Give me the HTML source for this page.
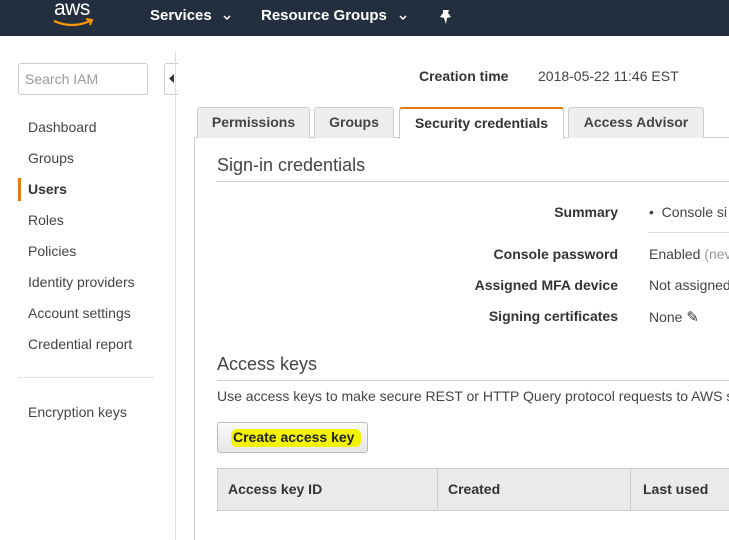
<!DOCTYPE html>
<html style="width:729px;height:540px;overflow:hidden"><head><style>
*{margin:0;padding:0;box-sizing:border-box}
body{width:729px;height:540px;overflow:hidden;background:#fff;font-family:"Liberation Sans",Arial,sans-serif;color:#444;position:relative;font-size:14px}
.a{position:absolute;white-space:nowrap}
.nav{position:absolute;left:0;top:0;width:729px;height:36px;background:#232f3e}
.nav .t{color:#fff;font-weight:bold;font-size:15px;top:7px}
.side a{position:absolute;left:28px;color:#444;font-size:14px}
.tab{position:absolute;top:107px;height:31px;background:#eee;border:1px solid #ccc;border-bottom:none;font-weight:bold;font-size:14px;color:#444;text-align:center;line-height:29px;border-radius:3px 3px 0 0;white-space:nowrap}
.lab{position:absolute;right:111px;font-weight:bold;font-size:14px;color:#333;text-align:right;white-space:nowrap}
.val{position:absolute;left:649px;font-size:14px;color:#444;white-space:nowrap}
</style></head><body>
<div class="nav">
<div class="a" style="left:54px;top:-3px;color:#fff;font-size:21px;letter-spacing:-0.5px">aws</div>
<svg class="a" style="left:52px;top:18px" width="44" height="12"><path d="M2 3 Q20 11 38 3" stroke="#f90" stroke-width="2.2" fill="none"/><path d="M34 1 L40 2 L38 7" stroke="#f90" stroke-width="2" fill="none"/></svg>
<div class="a t" style="left:150px">Services</div>
<svg class="a" style="left:223px;top:15px" width="8" height="6"><path d="M1 1 L4 4 L7 1" stroke="#fff" stroke-width="1.5" fill="none"/></svg>
<div class="a t" style="left:261px">Resource Groups</div>
<svg class="a" style="left:399px;top:15px" width="8" height="6"><path d="M1 1 L4 4 L7 1" stroke="#fff" stroke-width="1.5" fill="none"/></svg>
<svg class="a" style="left:439px;top:9px" width="14" height="16"><path d="M4 1 L10 1 L9 4 L12 8 L8 9 L7 15 L5 9 L1 8 L4 4 Z" fill="#fff"/></svg>
</div>
<div class="a" style="left:18px;top:63px;width:130px;height:32px;border:1px solid #ccc;border-radius:3px;color:#999;padding:7px 6px;font-size:14px">Search IAM</div>
<div class="a" style="left:164px;top:63px;width:14px;height:32px;border:1px solid #ccc;border-right:none;border-radius:3px 0 0 3px;background:#fff"></div>
<svg class="a" style="left:169px;top:74px" width="6" height="9"><path d="M5 0 L0 4.5 L5 9Z" fill="#333"/></svg>
<div class="a" style="left:175px;top:52px;width:1px;height:488px;background:#ddd"></div>
<div class="side">
<a style="top:119px">Dashboard</a>
<a style="top:150px">Groups</a>
<a style="top:181px;font-weight:bold;color:#333">Users</a>
<a style="top:212px">Roles</a>
<a style="top:243px">Policies</a>
<a style="top:274px">Identity providers</a>
<a style="top:305px">Account settings</a>
<a style="top:336px">Credential report</a>
<a style="top:404px">Encryption keys</a>
</div>
<div class="a" style="left:18px;top:178px;width:3px;height:23px;background:#e47911"></div>
<div class="a" style="left:18px;top:377px;width:135px;border-top:1px dotted #ccc"></div>
<div class="a" style="left:419px;top:68px;font-weight:bold;color:#333">Creation time</div>
<div class="a" style="left:538px;top:68px;color:#444">2018-05-22 11:46 EST</div>
<div class="a" style="left:194px;top:137px;width:535px;height:403px;border-top:1px solid #ccc;border-left:1px solid #ccc"></div>
<div class="tab" style="left:197px;width:113px">Permissions</div>
<div class="tab" style="left:314px;width:80px">Groups</div>
<div class="tab" style="left:399px;width:165px;background:#fff;border-top:2px solid #e47911;height:32px;color:#333">Security credentials</div>
<div class="tab" style="left:568px;width:136px">Access Advisor</div>
<div class="a" style="left:217px;top:155px;font-size:18px;color:#444">Sign-in credentials</div>
<div class="a" style="left:217px;top:181px;width:512px;height:1px;background:#ccc"></div>
<div class="lab" style="top:204px">Summary</div>
<div class="val" style="top:204px">•&nbsp; Console si</div>
<div class="a" style="left:648px;top:232px;width:81px;height:1px;background:#ddd"></div>
<div class="lab" style="top:246px">Console password</div>
<div class="val" style="top:246px">Enabled <span style="color:#999">(nev</span></div>
<div class="lab" style="top:277px">Assigned MFA device</div>
<div class="val" style="top:277px">Not assigned</div>
<div class="lab" style="top:308px">Signing certificates</div>
<div class="val" style="top:308px">None <span style="font-size:15px;color:#333">✎</span></div>
<div class="a" style="left:217px;top:354px;font-size:18px;color:#444">Access keys</div>
<div class="a" style="left:217px;top:380px;width:512px;height:1px;background:#ccc"></div>
<div class="a" style="left:217px;top:388px;color:#444">Use access keys to make secure REST or HTTP Query protocol requests to AWS s</div>
<div class="a" style="left:217px;top:422px;width:151px;height:31px;border:1px solid #bbb;border-radius:3px;background:linear-gradient(#fafafa,#e6e6e6)"></div>
<div class="a" style="left:231px;top:429px;height:18px;width:130px;background:#f4f400;border-radius:6px"></div>
<div class="a" style="left:233px;top:429px;font-weight:bold;color:#222">Create access key</div>
<div class="a" style="left:217px;top:468px;width:512px;height:43px;background:#eaeaea;border-top:1px solid #ccc;border-bottom:1px solid #ccc;border-left:1px solid #ccc"></div>
<div class="a" style="left:437px;top:468px;width:1px;height:43px;background:#ccc"></div>
<div class="a" style="left:630px;top:468px;width:1px;height:43px;background:#ccc"></div>
<div class="a" style="left:228px;top:481px;font-weight:bold;color:#333">Access key ID</div>
<div class="a" style="left:448px;top:481px;font-weight:bold;color:#333">Created</div>
<div class="a" style="left:643px;top:481px;font-weight:bold;color:#333">Last used</div>
</body></html>
